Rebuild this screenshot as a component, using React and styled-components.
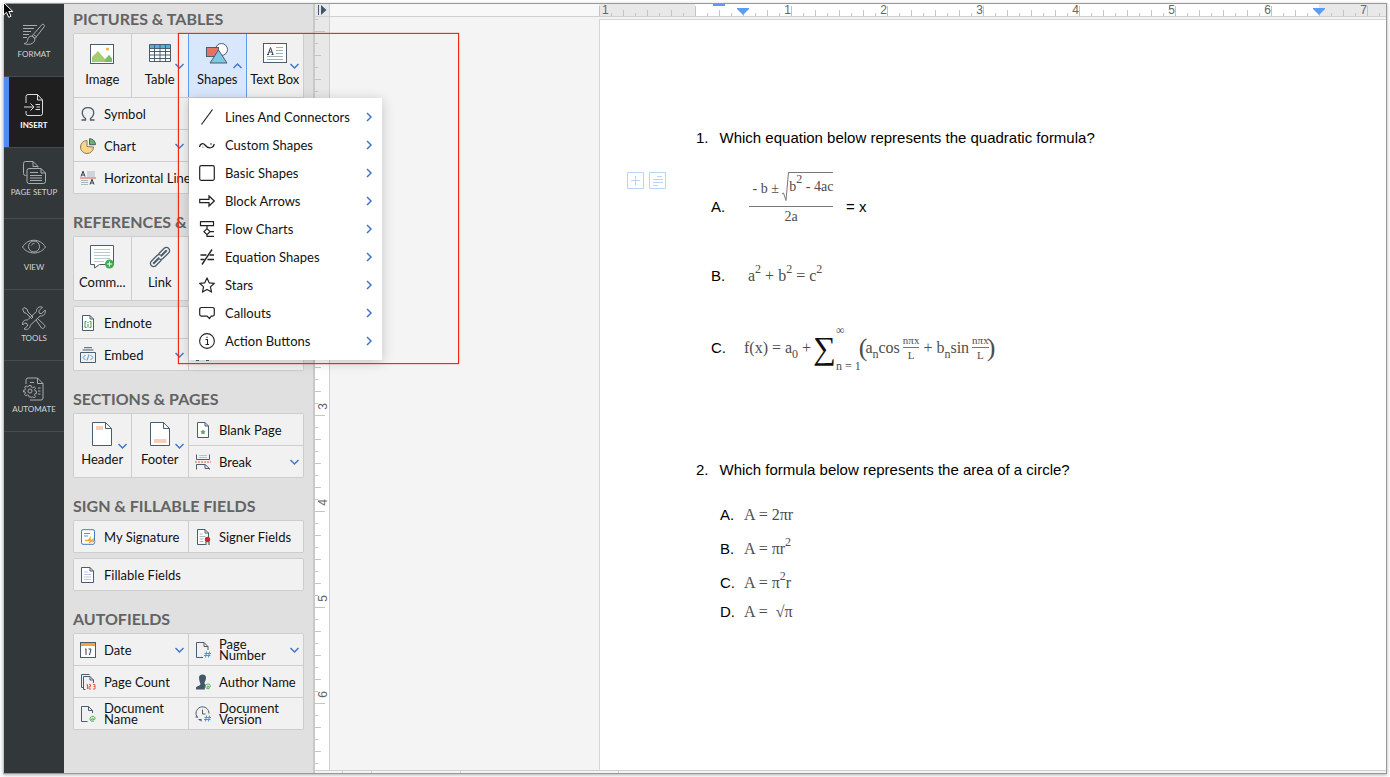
import React from 'react';
import styled, { createGlobalStyle, css } from 'styled-components';

const Global = createGlobalStyle`
  *, *::before, *::after { box-sizing: border-box; }
  body { margin: 0; background: #fdfdfd; font-family: Lato, "Open Sans", sans-serif; color: #111; }
  button { font: inherit; color: inherit; border: 0; padding: 0; margin: 0; background: none; cursor: pointer; }
  svg { display: block; flex: none; }
`;

const Screen = styled.div`
  height: 100vh;
  padding: 3px;
`;

const Window = styled.div`
  position: relative;
  display: flex;
  height: 100%;
  overflow: hidden;
  border: 1px solid #999;
  border-left-color: #c4c4c4;
  box-shadow: 0 1px 3px rgba(0, 0, 0, 0.3);
`;

const Nav = styled.nav`
  flex: none;
  width: 60px;
  padding-top: 2px;
  background: #32373a;
`;

const NavItem = styled.button`
  display: flex;
  flex-direction: column;
  align-items: center;
  gap: 2px;
  width: 100%;
  height: 71px;
  padding-top: ${(p) => (p.$compact ? 12 : 16)}px;
  border-bottom: 1px solid #484c4f;
  color: ${(p) => (p.$active ? '#fff' : '#d2d4d5')};
  font-size: 8px;
  font-weight: ${(p) => (p.$active ? 700 : 400)};
  line-height: 12px;
  white-space: nowrap;
  ${(p) =>
    p.$active &&
    css`
      background: #1f1f1f;
      box-shadow: inset 5px 0 #4c8df0;
    `}
`;

const Panel = styled.aside`
  flex: none;
  width: 251px;
  padding: 5px 9px 0;
  background: #e0e0e0;
  border-right: 2px solid #c9c9c9;
`;

const Section = styled.section`
  & + & { margin-top: 18px; }
`;

const Heading = styled.h2`
  margin: 0 0 4px;
  font-size: 16px;
  font-weight: 700;
  line-height: 20px;
  color: #636363;
  white-space: nowrap;
`;

const Grid = styled.div`
  display: grid;
  grid-template-columns: repeat(4, 1fr);
  grid-auto-rows: 31px;
  gap: 1px;
  width: 231px;
  border: 1px solid #cdcdcd;
  border-radius: 2px;
  background: #cdcdcd;
  & + & { margin-top: 5px; }
`;

const Cell = styled.div`
  position: relative;
  display: flex;
  min-width: 0;
  grid-column: span ${(p) => p.$cols || 2};
  grid-row: span ${(p) => (p.$big ? 2 : 1)};
  background: #f1f1f1;
`;

const BigButton = styled.button`
  position: relative;
  flex: 1;
  display: flex;
  flex-direction: column;
  align-items: center;
  gap: 4px;
  min-width: 0;
  padding-top: 8px;
  font-size: 13px;
  line-height: 18px;
  white-space: nowrap;
  ${(p) =>
    p.$open &&
    css`
      background: #d9e7fd;
      box-shadow: -1px 0 #5e9bf5, 1px 0 #5e9bf5;
    `}
`;

const SmallButton = styled.button`
  flex: 1;
  display: flex;
  align-items: center;
  gap: 8px;
  min-width: 0;
  padding: 0 4px 0 6px;
  font-size: 13px;
  line-height: ${(p) => (p.$twoLine ? 11 : 18)}px;
  text-align: left;
  white-space: ${(p) => (p.$twoLine ? 'normal' : 'nowrap')};
`;

const SmallLabel = styled.span`
  flex: 1;
  min-width: 0;
`;

const BigChevron = styled.span`
  position: absolute;
  right: 4px;
  top: 28px;
`;

const Menu = styled.ul`
  position: absolute;
  z-index: 5;
  top: 100%;
  left: 0;
  width: 193px;
  margin: 1px 0 0;
  padding: 5px 0;
  list-style: none;
  background: #fff;
  box-shadow: 0 2px 12px rgba(0, 0, 0, 0.2);
`;

const MenuItem = styled.button`
  display: flex;
  align-items: center;
  gap: 10px;
  width: 100%;
  height: 28px;
  padding: 0 9px 0 10px;
  font-size: 13px;
  line-height: 18px;
  text-align: left;
  white-space: nowrap;
`;

const Annotation = styled.div`
  position: absolute;
  z-index: 6;
  left: 174px;
  top: 29px;
  width: 281px;
  height: 331px;
  border: 1px solid #f02a17;
  box-shadow: 0 0 1px #f02a17;
  pointer-events: none;
`;

const Main = styled.main`
  flex: 1;
  min-width: 0;
  display: flex;
  flex-direction: column;
  background: #f4f4f4;
`;

const TopRuler = styled.div`
  display: flex;
  flex: none;
  height: 13px;
  border-bottom: 1px solid #cfcfcf;
  background: #f8f8f8;
`;

const RulerToggle = styled.button`
  display: flex;
  align-items: center;
  justify-content: center;
  width: 15px;
  border-right: 1px solid #cfcfcf;
  background: #e8e8e8;
`;

const RulerSpacer = styled.div`
  flex: none;
  width: 269px;
`;

const Scale = styled.div`
  position: relative;
  flex: 1;
  display: flex;
  overflow: hidden;
  align-items: flex-end;
  background: linear-gradient(90deg, #e8e8e8 96px, #fff 96px, #fff 720px, #e8e8e8 720px);
`;

const HTick = styled.span`
  position: relative;
  flex: none;
  width: 12px;
  height: ${(p) => p.$size}px;
  border-left: 1px solid #c4c4c4;
`;

const HLabel = styled.span`
  position: absolute;
  ${(p) => (p.$first ? 'left: 2px;' : 'right: 12px;')}
  bottom: 0;
  font: 12px/12px "Liberation Sans", sans-serif;
  color: #666;
`;

const Marker = styled.svg`
  position: absolute;
  top: ${(p) => p.$top}px;
  left: ${(p) => p.$left}px;
`;

const Body = styled.div`
  flex: 1;
  min-height: 0;
  display: flex;
`;

const SideRuler = styled.div`
  flex: none;
  width: 15px;
  padding-top: 2px;
  overflow: hidden;
  border-right: 1px solid #cfcfcf;
  background: linear-gradient(#e8e8e8 110px, #fff 110px);
`;

const VTick = styled.div`
  position: relative;
  height: 12px;
  &::before {
    content: '';
    display: block;
    width: ${(p) => p.$size}px;
    height: 1px;
    background: #c4c4c4;
  }
`;

const VLabel = styled.span`
  position: absolute;
  right: 0;
  bottom: 17px;
  writing-mode: sideways-lr;
  font: 12px/12px "Liberation Sans", sans-serif;
  color: #666;
`;

const Canvas = styled.div`
  flex: 1;
  min-width: 0;
  padding: 2px 0 0 269px;
`;

const Page = styled.article`
  position: relative;
  height: 100%;
  padding: 108px 40px 0 96px;
  border-top: 1px solid #d6d6d6;
  border-left: 1px solid #d6d6d6;
  background: #fff;
  font: 15px/20px "Liberation Sans", sans-serif;
  color: #000;
`;

const StatusStrip = styled.div`
  flex: none;
  display: flex;
  height: 3px;
  border-top: 1px solid #cfcfcf;
  background: #f4f4f4;
`;

const StatusPart = styled.span`
  width: ${(p) => p.$w}px;
  border-right: 1px solid #cfcfcf;
`;

const Question = styled.p`
  display: flex;
  gap: 11px;
  margin: ${(p) => p.$space || 0}px 0 0;
`;

const Options = styled.div`
  padding: ${(p) => (p.$inner ? '18px 0 0 24px' : '15px 0 0 15px')};
`;

const Option = styled.div`
  display: flex;
  align-items: center;
  height: ${(p) => p.$h}px;
`;

const OptionLabel = styled.span`
  width: ${(p) => p.$w}px;
`;

const Eq = styled.span`
  display: flex;
  align-items: center;
  font-family: "Liberation Serif", serif;
  font-size: 16px;
  line-height: 20px;
  color: #4d4d4d;
  white-space: pre;
`;

const Sup = styled.sup`
  font-size: 12px;
  line-height: 0;
  vertical-align: 8px;
`;

const Sub = styled.sub`
  font-size: 12px;
  line-height: 0;
  vertical-align: -5px;
`;

const Fraction = styled.span`
  display: grid;
  grid-template-rows: 1fr 1fr;
  justify-items: center;
  margin-left: ${(p) => p.$gap}px;
  font-size: ${(p) => p.$font}px;
  line-height: ${(p) => p.$line}px;
`;

const Numerator = styled.span`
  display: flex;
  align-items: center;
  border-bottom: 1px solid #777;
`;

const Radical = styled.span`
  display: flex;
  margin-bottom: 4px;
`;

const Radicand = styled.span`
  height: 30px;
  padding-top: 4px;
  border-top: 1px solid #777;
`;

const Sum = styled.span`
  margin-left: -2px;
  font-size: 32px;
  line-height: 40px;
  color: #111;
`;

const Limits = styled.span`
  display: flex;
  flex-direction: column;
  justify-content: space-between;
  height: 48px;
  font-size: 12px;
  line-height: 12px;
`;

const Paren = styled.span`
  font-size: 26px;
  line-height: 30px;
  margin: 0 -2px;
`;

const PageTools = styled.div`
  position: absolute;
  left: 27px;
  top: 152px;
  display: flex;
  gap: 5px;
`;

const Cursor = styled.svg`
  position: fixed;
  z-index: 10;
  left: 2px;
  top: 1px;
`;

/* ---------- icons ---------- */
const S = '#4b5c6c';

const Svg = ({ w = 16, h = w, c = S, sw = 1, children }) => (
  <svg width={w} height={h} viewBox={`0 0 ${w} ${h}`} fill="none" stroke={c} strokeWidth={sw} aria-hidden="true">
    {children}
  </svg>
);

const N = ({ children, c = '#a9adaf' }) => (
  <Svg w={24} c={c}>{children}</Svg>
);

const navIcons = {
  format: (
    <N>
      <path d="M1 3.500h14M1 6.500h11M1 9.500h8M1 12.500h6M1 15.500h4" />
      <path d="M10 14L20 2.500c1-1 3.200.600 2.200 2.200L13 16.500zM10 14l3 2.500M11.500 12.500l3 2.300M10 14c-3 0-4 2-4.500 4.500-.300 1.800-1.500 3-3.500 3 3 1.500 11 1.500 11-5" />
    </N>
  ),
  insert: (
    <N c="#dcdcdc">
      <path d="M4 10V3.500a2 2 0 012-2h9.500L20.500 7v13.500a2 2 0 01-2 2H6a2 2 0 01-2-2V18M15.500 1.500V7h5" />
      <path d="M2 14h10M8.500 10.500L12 14l-3.500 3.500M13.500 11.500h4.500M14.500 14h3.500M13.500 16.500h4.500" />
    </N>
  ),
  page: (
    <N>
      <path d="M4.500 15.500h-1a2 2 0 01-2-2v-10a2 2 0 012-2h7.500l5 5v1M11 1.500v5h5" />
      <path d="M7 8.500h12l4.500 4.500v8.500a2 2 0 01-2 2H7a2 2 0 01-2-2v-11a2 2 0 012-2zM19 8.500V13h4.500M8 12.500h8M8 15.500h12M8 18h12M8 20.500h12" />
    </N>
  ),
  view: (
    <N>
      <path d="M.500 12C6 3 18 3 23.500 12 18 20 6 20 .500 12z" />
      <circle cx="12" cy="11.500" r="5.500" />
      <path d="M9.500 10.500c.500-1.500 1.500-2 3-2" />
    </N>
  ),
  tools: (
    <N>
      <path d="M2 1.500L5 3l1 3 5 5-1.500 1.500-5-5L2 6.500.700 3zM14 14l1.500-1.500 7 6.500c1.500 1.500-1 4.500-3 3z" />
      <path d="M20.500 1.200l-3.700 3.700.500 2.300 2.300.500 3.500-3.700c1 3-1 6.500-5 6L8 19.500c.500 2.500-2.500 5-6 3.500l3.500-3-.500-2.500-2.500-.500L.700 19C0 16 2 13.500 5.500 14L14.500 5.500c-.500-3.500 3-5.500 6-4.300z" />
    </N>
  ),
  automate: (
    <N>
      <path d="M4 7V3a2 2 0 012-2h9.500l5.500 5.500V21a2 2 0 01-2 2H8M15.500 1v5.500H21M8 5.500h4M16 11h2.500M16 14h2.500M16 17h2.500" />
      <circle cx="8" cy="14" r="2" />
      <path d="M7 8.500h2l.400 1.700 1.300.600 1.500-1 1.400 1.400-1 1.500.500 1.300 1.400.300v2l-1.500.400-.500 1.300 1 1.400-1.500 1.400-1.400-1-1.300.500L9 20H7l-.400-1.700-1.300-.500-1.400 1-1.400-1.400 1-1.500-.500-1.200L1.500 15v-1.700l1.600-.500.500-1.300-1-1.400L4 8.800l1.500 1 1.200-.500z" />
    </N>
  ),
};

const I = {
  image: (
    <Svg w={24}>
      <rect x=".500" y="2.500" width="23" height="19" fill="#fff" />
      <path d="M2 20v-5l6-6 7 8 4-4 3 3.500V20z" fill="#a6cc72" stroke="none" />
      <path d="M14 20l5-7 3 3.500V20z" fill="#78bb74" stroke="none" />
      <circle cx="17.500" cy="7" r="1.500" fill="#f4a938" stroke="none" />
    </Svg>
  ),
  table: (
    <Svg w={24}>
      <path d="M1.500 2.500h21v17h-21z" fill="#fff" />
      <path d="M2 3h20v3.500H2z" fill="#4db5dc" stroke="none" />
      <path d="M1.500 6.500h21M1.500 9.500h21M1.500 13h21M1.500 16.500h21M6.500 2.500v17M12 2.500v17M17.500 2.500v17" />
    </Svg>
  ),
  shapes: (
    <Svg w={24}>
      <circle cx="16.500" cy="7.500" r="6" fill="#fff" />
      <rect x="1.500" y="5.500" width="12" height="9" fill="#e57363" />
      <path d="M13.500 8l8.500 13H5z" fill="#7ec8e3" />
    </Svg>
  ),
  textbox: (
    <Svg w={24}>
      <rect x=".500" y="1.500" width="23" height="19" fill="#fff" />
      <path d="M4 12.500h2M8.500 12.500h2M5 12.500l2.500-7 2.500 7M6 10h3" stroke="#32404d" />
      <path d="M13 5.500h7M13 8.500h7M13 11.500h7M4 14.500h16M4 17.500h16" stroke="#9fb0b8" />
    </Svg>
  ),
  comment: (
    <Svg w={26} h={24}>
      <path d="M1.500.500h23v19H10.500L5.500 23v-3.500h-4z" fill="#fff" />
      <path d="M5 4.500h16M5 7.500h16M5 10.500h16M5 13.500h16M5 16.500h10" stroke="#bccad0" />
      <circle cx="20.500" cy="19" r="4.500" fill="#48a94b" stroke="none" />
      <path d="M18 19h5M20.500 16.500v5" stroke="#fff" />
    </Svg>
  ),
  link: (
    <Svg w={24} sw={1.3}>
      <path d="M10.500 9L16.200 3.300a3 3 0 014.300 0l.200.200a3 3 0 010 4.300L15 13.500a3 3 0 01-3.600.500" />
      <path d="M13.500 15L7.800 20.700a3 3 0 01-4.300 0l-.200-.200a3 3 0 010-4.300L9 10.500a3 3 0 013.600-.500" />
      <path d="M12.500 11l5.500-5.500.600.600L13 11.600M11.500 13L6 18.500l-.600-.600L11 12.400" />
    </Svg>
  ),
  header: (
    <Svg w={24}>
      <path d="M2.500.500h13l6 6v17h-19z" fill="#fff" />
      <path d="M15.500.500v6h6" />
      <path d="M6 4h7v4H6z" fill="#f7cdbc" stroke="none" />
    </Svg>
  ),
  footer: (
    <Svg w={24}>
      <path d="M2.500.500h13l6 6v17h-19z" fill="#fff" />
      <path d="M15.500.500v6h6" />
      <path d="M6 17h12.500v4H6z" fill="#f7cdbc" stroke="none" />
    </Svg>
  ),
  symbol: (
    <Svg sw={1.3}>
      <path d="M1.500 14h4v-1.500C1 9.500.800 1.600 8 1.600s7 7.900 2.500 10.900V14h4" />
    </Svg>
  ),
  chart: (
    <Svg>
      <path d="M7 2.500A6.500 6.500 0 1013.500 9L7 8.500z" fill="#f9d58a" stroke="#8a7a58" />
      <path d="M9.500.700a6 6 0 016 6h-6z" fill="#62b565" stroke={S} />
    </Svg>
  ),
  hline: (
    <Svg>
      <path d="M1 6.500L3 1.200l2 5.300M1.700 5h2.600M10 14.500l2-5.300 2 5.300M10.700 13h2.600" stroke="#32404d" />
      <path d="M7 2h8M7 4h8M7 6h8M1 10.500h7M1 12.500h7M1 14.500h7" stroke="#a9b9c0" />
      <path d="M0 8h16" stroke="#e2574c" />
    </Svg>
  ),
  endnote: (
    <Svg>
      <path d="M2.500.500h7.500l3.500 3.500v11.500h-11zM10 .500V4h3.500" fill="#fff" />
      <path d="M6.500 6.500H5v6h1.500M9.500 6.500H11v6H9.500M8 9v3.500M8 7v1" stroke="#3e9c48" />
    </Svg>
  ),
  embed: (
    <Svg>
      <path d="M4 .700h8M2.500 3h11M.500 5.500h15v10H.500z" />
      <path d="M5.500 8L3 10.500 5.500 13M10.500 8l2.500 2.500-2.500 2.500M9 7.500l-2 6" stroke="#3b9be0" />
    </Svg>
  ),
  footnote: (
    <Svg>
      <path d="M1 13.500h3M11 13.500h3" />
    </Svg>
  ),
  blank: (
    <Svg>
      <path d="M2.500.500h7.500l3.500 3.500v11.500h-11zM10 .500V4h3.500" fill="#fff" />
      <path d="M8 7.800l.700 1.400 1.600.200-1.200 1.100.300 1.600L8 11.300l-1.400.800.300-1.600-1.200-1.100 1.600-.200z" fill="#49a84e" stroke="#49a84e" strokeWidth=".500" />
    </Svg>
  ),
  brk: (
    <Svg>
      <path d="M1.500.500v5h13v-5M1.500 15.500v-5H10l4.500 4v1M10 10.500v4h4" />
      <path d="M4 1.500h8M4 3.500h8" stroke="#b5c3ca" />
      <path d="M0 8h16" stroke="#e2574c" strokeDasharray="2 1" />
    </Svg>
  ),
  signature: (
    <Svg>
      <rect x="1.500" y=".700" width="13" height="14.600" rx="1.500" stroke="#3f7cc4" fill="#fff" />
      <path d="M4 4.500h6M4 7h4" stroke="#5f92d2" />
      <path d="M5 11.500h3.500l1.500-2v3.500l3-2.500v2h2.500" stroke="#f2a63a" strokeWidth="1.600" />
    </Svg>
  ),
  signer: (
    <Svg>
      <path d="M13.500 8V4L10 .500H2.500v15h8M10 .500V4h3.500" fill="#fff" />
      <path d="M4.500 5h3M4.500 7.500h6M4.500 10h4M4.500 12.500h4" stroke="#a9b9c0" />
      <circle cx="12.500" cy="10.500" r="2.700" fill="#d8232f" stroke="none" />
      <path d="M11 12.500V16M14 12.500V16" stroke="#32404d" />
    </Svg>
  ),
  fillable: (
    <Svg>
      <path d="M1.500.500h8.500l3.500 3.500v11.500h-12zM10 .500V4h3.500" fill="#fff" />
      <path d="M4 5h4M4 7.500h7M4 10h7M4 12.500h7" stroke="#c9bff2" />
    </Svg>
  ),
  date: (
    <Svg>
      <rect x=".500" y=".500" width="15" height="15" fill="#fff" />
      <path d="M1 1h14v3H1z" fill="#f0a53c" stroke="none" />
      <path d="M5 7.500l1-.700V13M8.500 7H11l-1.500 6" stroke="#32404d" />
    </Svg>
  ),
  pageNumber: (
    <Svg>
      <path d="M13 8V4.500L9 .500H1.500v15H8M9 .500v4h4" />
      <path d="M11.500 9.500l-1 6M14.500 9.500l-1 6M9.500 11.500h6.500M9 13.500h6.500" stroke="#3b9be0" />
    </Svg>
  ),
  pageCount: (
    <Svg>
      <path d="M3 13.500H1.500V.500h8M5.500 15.500h-2v-13H10l3.500 3.500v3M10 2.500V6h3.500" />
      <path d="M6.500 11l1-.500v4.500M9 10.500h1.500v2H9V15h2M13 10.500h2v4.500h-2M13.500 12.500H15" stroke="#e2574c" />
    </Svg>
  ),
  author: (
    <Svg>
      <path d="M4 3.500C4 1.500 5.500.500 7.500.500s3.500 1 3.500 3c0 2.500-1 4-1.500 5 0 1.500.500 2 1.500 2.500-1 1.500-1.500 3-1 4.500H1v-2c1-1.500 4-1.500 4.500-3.500C5 8.500 4 6.500 4 3.500z" fill="#44566a" stroke="none" />
      <path d="M14.500 14.500c-2.500 1-4-.500-4-2s1.200-2.500 2.800-2.500 2.200 1.200 2 2.500-1.600 1-1.600 0-1.700-.700-1.700.500 1.700.700 1.700-.500" stroke="#57b04f" />
    </Svg>
  ),
  docName: (
    <Svg>
      <path d="M12.500 7V4.500l-4-4H1.500v15h6M8.500.500v4h4" />
      <path d="M14 15c-2.500 1-4-.500-4-2s1.200-2.700 2.800-2.700 2.400 1.200 2.200 2.600-1.700 1-1.700 0-1.800-.700-1.800.500 1.800.700 1.800-.500" stroke="#57b04f" />
    </Svg>
  ),
  docVersion: (
    <Svg>
      <path d="M2.500 11.500A6.500 6.500 0 1114 7.500M7.500 3.500V8h3M.500 11h2.500M3.500 13.500h3M4 13.500c1 1 2 1.300 3 1.500" />
      <path d="M11.500 9.500l-1 6M14.500 9.500l-1 6M9.500 11.500h6.500M9 13.500h6.500" stroke="#3b9be0" />
    </Svg>
  ),
  none: <Svg />,
};

const K = '#222';
const M = {
  line: <Svg c={K} sw={1.2}><path d="M2.500 15.500l11-15" /></Svg>,
  custom: <Svg c={K} sw={1.3}><path d="M.500 10C1 7 4 5.500 6 8s4 3.500 6.500 2.500c1.500-.500 2.500-2 2.800-3.500" /><circle cx="4" cy="10" r=".600" fill={K} stroke="none" /><circle cx="12" cy="7" r=".800" fill={K} stroke="none" /></Svg>,
  basic: <Svg c={K} sw={1.2}><rect x=".700" y=".700" width="14.600" height="14.600" rx="1.500" /></Svg>,
  arrow: <Svg c={K} sw={1.2}><path d="M.700 6.300H10V3l5.300 5L10 13V9.700H.700z" /></Svg>,
  flow: <Svg c={K} sw={1.2}><path d="M1.500.700h13v4h-13zM8 4.700v3M8 7.700l3 3-3 3-3-3zM11 10.700h4M8 13.700v1.700h7" /></Svg>,
  equation: <Svg c={K} sw={1.4}><path d="M3 15.500L13 .500" /><path d="M1.500 6h6M1.500 10.500h4M10.500 6H15M8.500 10.500H15" /></Svg>,
  star: <Svg c={K} sw={1.2}><path d="M8 .900l2.200 4.900 5.200.500-4 3.600 1.200 5.200L8 12.400l-4.600 2.700 1.200-5.200-4-3.600 5.200-.500z" strokeLinejoin="round" /></Svg>,
  callout: <Svg c={K} sw={1.2}><path d="M2.500 2.500h11a1.800 1.800 0 011.800 1.800v5a1.800 1.800 0 01-1.800 1.800h-1.300L10.500 13.500 8 11.100H2.500A1.800 1.800 0 01.700 9.300v-5a1.800 1.800 0 011.800-1.800z" /></Svg>,
  action: <Svg c={K} sw={1.1}><circle cx="8" cy="8" r="7.400" /><path d="M6.500 6.500h2v5M6.500 11.500h3.500M8 3.700v1.300" /></Svg>,
};

const Chevron = ({ up }) => (
  <svg width="9" height="8" viewBox="0 0 9 8" fill="none" stroke="#3f76cf" strokeWidth="1.500" aria-hidden="true">
    <path d={up ? 'M.500 6L4.500 2l4 4' : 'M.500 2l4 4 4-4'} />
  </svg>
);

const Big = ({ icon, label, chevron, open, children }) => (
  <Cell $cols={1} $big>
    <BigButton $open={open} aria-expanded={open}>
      {I[icon]}
      <span>{label}</span>
      {chevron && <BigChevron><Chevron up={open} /></BigChevron>}
    </BigButton>
    {children}
  </Cell>
);

const Small = ({ icon, label, chevron, wide, twoLine }) => (
  <Cell $cols={wide ? 4 : 2}>
    <SmallButton $twoLine={twoLine} aria-label={label || 'More'}>
      {I[icon]}
      <SmallLabel>{label}</SmallLabel>
      {chevron && <Chevron />}
    </SmallButton>
  </Cell>
);

const menuItems = [
  ['line', 'Lines And Connectors'],
  ['custom', 'Custom Shapes'],
  ['basic', 'Basic Shapes'],
  ['arrow', 'Block Arrows'],
  ['flow', 'Flow Charts'],
  ['equation', 'Equation Shapes'],
  ['star', 'Stars'],
  ['callout', 'Callouts'],
  ['action', 'Action Buttons'],
];

const navItems = [
  ['format', 'FORMAT'],
  ['insert', 'INSERT'],
  ['page', 'PAGE SETUP'],
  ['view', 'VIEW'],
  ['tools', 'TOOLS'],
  ['automate', 'AUTOMATE'],
];

const ShapesMenu = () => (
  <Menu>
    {menuItems.map(([icon, label]) => (
      <li key={icon}>
        <MenuItem>
          {M[icon]}
          <SmallLabel>{label}</SmallLabel>
          <svg width="8" height="10" viewBox="0 0 8 10" fill="none" stroke="#3f76cf" strokeWidth="1.500" aria-hidden="true">
            <path d="M2 1l4 4-4 4" />
          </svg>
        </MenuItem>
      </li>
    ))}
  </Menu>
);

const InsertPanel = () => (
  <Panel>
    <Section>
      <Heading>PICTURES &amp; TABLES</Heading>
      <Grid>
        <Big icon="image" label="Image" />
        <Big icon="table" label="Table" chevron />
        <Big icon="shapes" label="Shapes" chevron open><ShapesMenu /></Big>
        <Big icon="textbox" label="Text Box" chevron />
        <Small icon="symbol" label="Symbol" />
        <Small icon="none" />
        <Small icon="chart" label="Chart" chevron />
        <Small icon="none" />
        <Small icon="hline" label="Horizontal Line" />
        <Small icon="none" />
      </Grid>
    </Section>
    <Section>
      <Heading>REFERENCES &amp;</Heading>
      <Grid>
        <Big icon="comment" label="Comm..." />
        <Big icon="link" label="Link" />
        <Big icon="none" />
        <Big icon="none" />
      </Grid>
      <Grid>
        <Small icon="endnote" label="Endnote" />
        <Small icon="none" />
        <Small icon="embed" label="Embed" chevron />
        <Small icon="footnote" />
      </Grid>
    </Section>
    <Section>
      <Heading>SECTIONS &amp; PAGES</Heading>
      <Grid>
        <Big icon="header" label="Header" chevron />
        <Big icon="footer" label="Footer" chevron />
        <Small icon="blank" label="Blank Page" />
        <Small icon="brk" label="Break" chevron />
      </Grid>
    </Section>
    <Section>
      <Heading>SIGN &amp; FILLABLE FIELDS</Heading>
      <Grid>
        <Small icon="signature" label="My Signature" />
        <Small icon="signer" label="Signer Fields" />
      </Grid>
      <Grid>
        <Small icon="fillable" label="Fillable Fields" wide />
      </Grid>
    </Section>
    <Section>
      <Heading>AUTOFIELDS</Heading>
      <Grid>
        <Small icon="date" label="Date" chevron />
        <Small icon="pageNumber" label="Page Number" chevron twoLine />
        <Small icon="pageCount" label="Page Count" />
        <Small icon="author" label="Author Name" />
        <Small icon="docName" label="Document Name" twoLine />
        <Small icon="docVersion" label="Document Version" twoLine />
      </Grid>
    </Section>
  </Panel>
);

const tickSize = (n) => (n % 8 === 0 ? 10 : n % 2 === 0 ? 6 : 3);

const HorizontalRuler = () => (
  <TopRuler>
    <RulerToggle aria-label="Toggle ruler">
      <svg width="9" height="10" viewBox="0 0 9 10" aria-hidden="true">
        <path d="M0 0h1v10H0zM3 0l5.500 5L3 10z" fill="#44566a" />
      </svg>
    </RulerToggle>
    <RulerSpacer />
    <Scale>
      {Array.from({ length: 68 }, (_, i) => (
        <HTick key={i} $size={tickSize(i)}>
          {i % 8 === 0 && i !== 8 && <HLabel $first={i === 0}>{Math.abs(i / 8 - 1)}</HLabel>}
        </HTick>
      ))}
      <Marker $left={114} $top={0} width="12" height="2"><path d="M0 0h12v2H0z" fill="#5e9bf5" /></Marker>
      <Marker $left={138} $top={4} width="12" height="7"><path d="M0 0h12v1L6 7 0 1z" fill="#5e9bf5" /></Marker>
      <Marker $left={714} $top={4} width="12" height="7"><path d="M0 0h12v1L6 7 0 1z" fill="#5e9bf5" /></Marker>
    </Scale>
  </TopRuler>
);

const VerticalRuler = () => (
  <SideRuler>
    {Array.from({ length: 64 }, (_, i) => {
      const n = i - 1;
      return (
        <VTick key={i} $size={tickSize(n)}>
          {n % 8 === 0 && n > 24 && <VLabel>{n / 8 - 1}</VLabel>}
          {n === 0 && <VLabel />}
        </VTick>
      );
    })}
  </SideRuler>
);

const Frac = ({ gap = 0, font = 11, line = 14, top, bottom }) => (
  <Fraction $gap={gap} $font={font} $line={line}>
    <Numerator>{top}</Numerator>
    <span>{bottom}</span>
  </Fraction>
);

const Document = () => (
  <Page>
    <PageTools>
      <button aria-label="Add">
        <Svg w={17} c="#bcd3f8"><path d="M.500.500h16v16H.500zM4 8.500h9M8.500 4v9" /></Svg>
      </button>
      <button aria-label="Paragraph">
        <Svg w={17} c="#bcd3f8"><path d="M.500.500h16v16H.500zM8 4.500h5M4 7.500h10M4 10.500h10M4 13.500h5" /></Svg>
      </button>
    </PageTools>
    <Question><span>1.</span><span>Which equation below represents the quadratic formula?</span></Question>
    <Options>
      <Option $h={88}>
        <OptionLabel $w={38}>A.</OptionLabel>
        <Eq>
          <Frac
            font={14}
            line={20}
            top={
              <>
                <span> - b ± </span>
                <Radical>
                  <svg width="7" height="30" viewBox="0 0 7 30" fill="none" stroke="#777" aria-hidden="true">
                    <path d="M0 22l1.500-1L4 28.500 6.500 0" />
                  </svg>
                  <Radicand>b<Sup>2</Sup> - 4ac</Radicand>
                </Radical>
              </>
            }
            bottom="2a"
          />
        </Eq>
        <span>&nbsp;&nbsp; = x</span>
      </Option>
      <Option $h={50}>
        <OptionLabel $w={37}>B.</OptionLabel>
        <Eq><span>a<Sup>2</Sup> + b<Sup>2</Sup> = c<Sup>2</Sup></span></Eq>
      </Option>
      <Option $h={94}>
        <OptionLabel $w={33}>C.</OptionLabel>
        <Eq>
          <span>f(x) = a<Sub>0</Sub> + </span>
          <Sum>∑</Sum>
          <Limits><span>∞</span><span>n = 1</span></Limits>
          <Paren>(</Paren>
          <span>a<Sub>n</Sub>cos</span>
          <Frac gap={3} top="nπx" bottom="L" />
          <span> + b<Sub>n</Sub>sin</span>
          <Frac gap={3} top="nπx" bottom="L" />
          <Paren>)</Paren>
        </Eq>
      </Option>
    </Options>
    <Question $space={65}><span>2.</span><span>Which formula below represents the area of a circle?</span></Question>
    <Options $inner>
      <Option $h={34}><OptionLabel $w={24}>A.</OptionLabel><Eq>A = 2πr</Eq></Option>
      <Option $h={34}><OptionLabel $w={24}>B.</OptionLabel><Eq><span>A = πr<Sup>2</Sup></span></Eq></Option>
      <Option $h={34}><OptionLabel $w={24}>C.</OptionLabel><Eq><span>A = π<Sup>2</Sup>r</span></Eq></Option>
      <Option $h={24}><OptionLabel $w={24}>D.</OptionLabel><Eq>A =  √π</Eq></Option>
    </Options>
  </Page>
);

export default function App() {
  return (
    <Screen>
      <Global />
      <Window>
        <Nav>
          {navItems.map(([icon, label]) => (
            <NavItem key={icon} $active={icon === 'insert'} $compact={icon === 'page'}>
              {navIcons[icon]}
              <span>{label}</span>
            </NavItem>
          ))}
        </Nav>
        <InsertPanel />
        <Main>
          <HorizontalRuler />
          <Body>
            <VerticalRuler />
            <Canvas><Document /></Canvas>
          </Body>
          <StatusStrip>
            <StatusPart $w={28} />
            <StatusPart $w={29} />
            <StatusPart $w={89} />
            <StatusPart $w={158} />
          </StatusStrip>
        </Main>
        <Annotation />
      </Window>
      <Cursor width="13" height="18" viewBox="0 0 13 18" aria-hidden="true">
        <path d="M1.500 1.500v12.500l3-2.700 2.200 5 2.300-1-2.200-4.800h4z" fill="#000" stroke="#fff" />
      </Cursor>
    </Screen>
  );
}
